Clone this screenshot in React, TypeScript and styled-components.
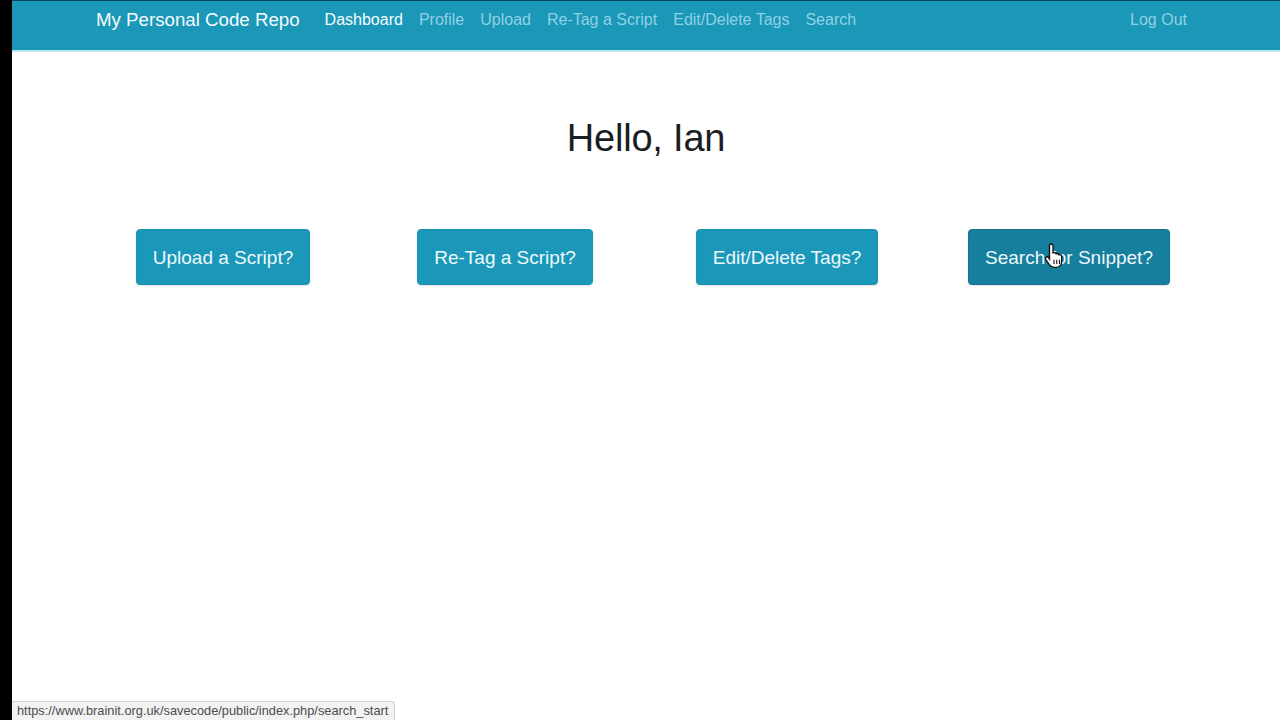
import React from 'react';
import styled, { createGlobalStyle } from 'styled-components';

const GlobalStyle = createGlobalStyle`
  html, body {
    margin: 0;
    padding: 0;
    background: #000;
  }

  body {
    font-family: 'Liberation Sans', Arial, Helvetica, sans-serif;
    color: #212529;
  }
`;

const Frame = styled.div`
  display: flex;
  flex-direction: row;
  width: 1280px;
  height: 720px;
  overflow: hidden;
  position: relative;
`;

const Strip = styled.div`
  width: 12px;
  flex-shrink: 0;
  background: #000;
`;

const Page = styled.div`
  flex: 1;
  display: flex;
  flex-direction: column;
  background: #fff;
`;

const Navbar = styled.nav`
  height: 49px;
  background-color: #1b97b7;
  border-top: 1px solid #0e4656;
  border-bottom: 2px solid #b9e8f3;
`;

const Container = styled.div`
  width: 1128px;
  margin: 0 auto;
  padding: 0 15px;
  box-sizing: border-box;
`;

const NavInner = styled(Container)`
  display: flex;
  flex-direction: row;
  align-items: center;
  height: 100%;
  padding-bottom: 12px;
`;

const Brand = styled.a`
  font-size: 18.7px;
  line-height: 24px;
  color: #f4fbfd;
  margin-right: 17px;
  margin-left: -1px;
  white-space: nowrap;
`;

const NavLink = styled.a<{ $active?: boolean; $push?: boolean }>`
  font-size: 16px;
  line-height: 24px;
  padding: 0 8px;
  white-space: nowrap;
  color: ${(p) => (p.$active ? '#f6fcfe' : '#8fd2e3')};
  margin-left: ${(p) => (p.$push ? 'auto' : '0')};
`;

const Main = styled(Container)`
  display: flex;
  flex-direction: column;
  align-items: center;
`;

const Heading = styled.h1`
  margin: 63px 0 0;
  font-size: 38px;
  font-weight: 500;
  line-height: 46px;
  color: #1a1d21;
  letter-spacing: -0.2px;
`;

const ButtonRow = styled.div`
  display: grid;
  grid-template-columns: repeat(4, 282px);
  width: 1128px;
  margin-top: 68px;
  justify-items: center;
`;

const BigButton = styled.a<{ $hover?: boolean }>`
  display: inline-block;
  box-sizing: border-box;
  height: 56px;
  padding: 0 16px;
  line-height: 55px;
  font-size: 19px;
  color: #eef8fb;
  white-space: nowrap;
  border-radius: 4px;
  background-color: ${(p) => (p.$hover ? '#167f9d' : '#1b98b9')};
  border: 1px solid ${(p) => (p.$hover ? '#137390' : '#1a93b3')};
  box-shadow: 0 1px 2px rgba(0, 0, 0, 0.12);
`;

const StatusBar = styled.div`
  position: absolute;
  left: 12px;
  bottom: 0;
  height: 18px;
  padding: 0 6px 0 5px;
  background: #f2f2f2;
  border-top: 1px solid #d4d4d4;
  border-right: 1px solid #d4d4d4;
  border-top-right-radius: 3px;
  font-size: 12.8px;
  line-height: 18px;
  color: #4d4d4d;
  white-space: nowrap;
`;

const Cursor = styled.svg`
  position: absolute;
  left: 1043px;
  top: 242px;
`;

const navItems = ['Profile', 'Upload', 'Re-Tag a Script', 'Edit/Delete Tags', 'Search'];

const actions = ['Upload a Script?', 'Re-Tag a Script?', 'Edit/Delete Tags?', 'Search for Snippet?'];

const App = () => {
  return (
    <>
      <GlobalStyle />
      <Frame>
        <Strip />
        <Page>
          <Navbar>
            <NavInner>
              <Brand>My Personal Code Repo</Brand>
              <NavLink $active>Dashboard</NavLink>
              {navItems.map((item) => (
                <NavLink key={item}>{item}</NavLink>
              ))}
              <NavLink $push>Log Out</NavLink>
            </NavInner>
          </Navbar>
          <Main>
            <Heading>Hello, Ian</Heading>
            <ButtonRow>
              {actions.map((label, i) => (
                <BigButton key={label} $hover={i === 3}>
                  {label}
                </BigButton>
              ))}
            </ButtonRow>
          </Main>
        </Page>
        <Cursor width="22" height="26" viewBox="0 0 16 19">
          <path
            d="M6 1.5 C6.8 1.5 7.3 2 7.3 2.8 V8 L8 7.8 C8.8 7.6 9.4 8 9.5 8.6 L10.2 8.4 C11 8.3 11.5 8.7 11.6 9.3 L12.3 9.2 C13.1 9.2 13.6 9.7 13.6 10.5 V14 C13.6 16.5 12 18.5 9.5 18.5 H8 C6.5 18.5 5.5 17.8 4.6 16.6 L2 12.8 C1.5 12.1 1.7 11.3 2.3 11 C2.9 10.7 3.6 10.9 4 11.5 L4.7 12.5 V2.8 C4.7 2 5.2 1.5 6 1.5 Z"
            fill="#fff"
            stroke="#111"
            strokeWidth="1"
          />
          <path d="M8 13 V16 M10 13 V16 M12 13 V16" stroke="#111" strokeWidth="0.8" />
        </Cursor>
        <StatusBar>https://www.brainit.org.uk/savecode/public/index.php/search_start</StatusBar>
      </Frame>
    </>
  );
};

export default App;
